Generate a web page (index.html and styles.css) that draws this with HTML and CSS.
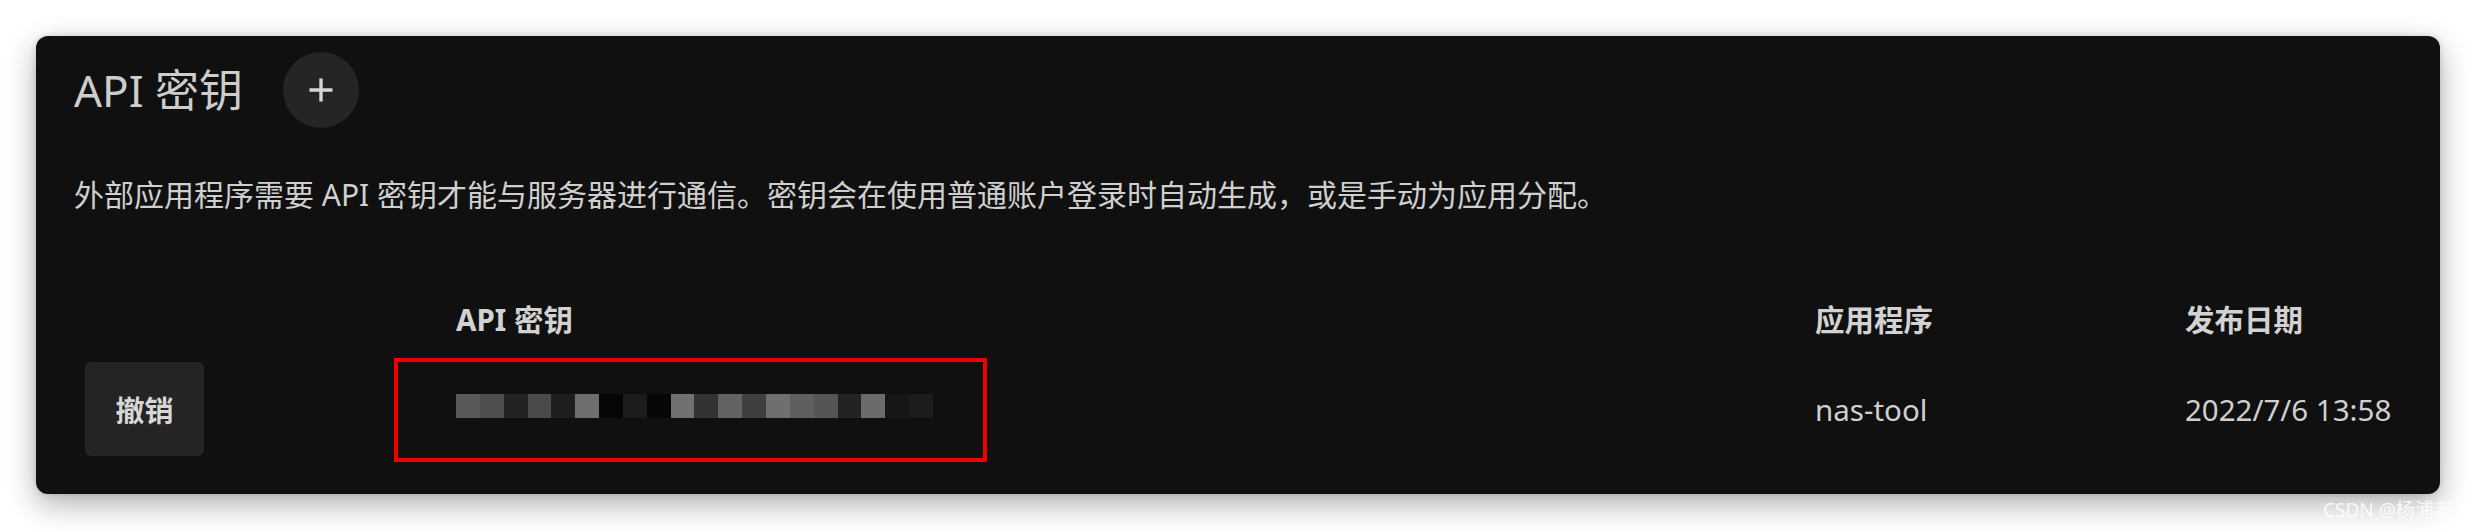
FILE: index.html
```html
<!DOCTYPE html>
<html lang="zh-CN">
<head>
<meta charset="utf-8">
<title>API 密钥</title>
<link rel="stylesheet" href="styles.css">
</head>
<body>
<section class="card">
  <div class="title-row">
    <h2 class="title">API 密钥</h2>
    <button class="add-btn" aria-label="添加">
      <svg width="26" height="26" viewBox="0 0 26 26"><path d="M13 1.5V24.5M1.5 13H24.5" stroke="#d6d6d6" stroke-width="3.4" fill="none"/></svg>
    </button>
  </div>
  <p class="desc">外部应用程序需要 API 密钥才能与服务器进行通信。密钥会在使用普通账户登录时自动生成，或是手动为应用分配。</p>
  <div class="table">
    <div class="th"></div>
    <div class="th">API 密钥</div>
    <div class="th">应用程序</div>
    <div class="th">发布日期</div>

    <div class="td"><button class="revoke">撤销</button></div>
    <div class="td key-cell">
      <div class="pixels">
        <span style="background:#585858"></span><span style="background:#4e4e4e"></span><span style="background:#232323"></span><span style="background:#4a4a4a"></span><span style="background:#1e1e1e"></span><span style="background:#6e6e6e"></span><span style="background:#060606"></span><span style="background:#1c1c1c"></span><span style="background:#070707"></span><span style="background:#717171"></span><span style="background:#333333"></span><span style="background:#626262"></span><span style="background:#3f3f3f"></span><span style="background:#6f6f6f"></span><span style="background:#5f5f5f"></span><span style="background:#555555"></span><span style="background:#232323"></span><span style="background:#6b6b6b"></span><span style="background:#161616"></span><span style="background:#1c1c1c"></span>
      </div>
      <div class="highlight"></div>
    </div>
    <div class="td">nas-tool</div>
    <div class="td">2022/7/6 13:58</div>
  </div>
</section>
<div class="watermark">CSDN @杨浦老苏</div>
</body>
</html>
```

FILE: styles.css
```css
html, body {
  margin: 0;
  padding: 0;
  background: #ffffff;
}
body {
  width: 2476px;
  height: 530px;
  position: relative;
  overflow: hidden;
  font-family: "Noto Sans", "Noto Sans CJK SC", sans-serif;
  color: #cfcfcf;
}
.card {
  margin: 36px 36px 0 36px;
  width: 2404px;
  height: 458px;
  box-sizing: border-box;
  padding: 16px 51px 38px 38px;
  background: #101010;
  border-radius: 12px;
  box-shadow: 0 10px 30px rgba(0,0,0,0.32), 0 0 6px rgba(0,0,0,0.12);
}
.title-row {
  display: flex;
  align-items: center;
  gap: 40px;
  height: 76px;
}
.title {
  margin: 0;
  font-size: 44px;
  font-weight: 400;
  line-height: 1;
  color: #cdcdcd;
}
.add-btn {
  width: 76px;
  height: 76px;
  border-radius: 50%;
  border: none;
  padding: 0;
  background: #252525;
  display: flex;
  align-items: center;
  justify-content: center;
}
.desc {
  margin: 44px 0 0 0;
  font-size: 30px;
  line-height: 45px;
  color: #cfcfcf;
}
.table {
  margin-top: 81px;
  display: grid;
  grid-template-columns: 382px 1359px 370px 1fr;
}
.th {
  height: 44px;
  line-height: 44px;
  font-size: 29.5px;
  font-weight: 700;
  color: #d2d2d2;
  white-space: nowrap;
}
.td {
  height: 114px;
  box-sizing: border-box;
  padding-top: 20px;
  display: flex;
  align-items: center;
  font-size: 29.5px;
  color: #cfcfcf;
  white-space: nowrap;
}
.revoke {
  margin-left: 11px;
  width: 119px;
  height: 94px;
  border: none;
  border-radius: 6px;
  background: #242424;
  color: #d6d6d6;
  font-family: "Noto Sans", "Noto Sans CJK SC", sans-serif;
  font-size: 29px;
  font-weight: 700;
  padding: 0;
}
.key-cell {
  position: relative;
}
.pixels {
  display: flex;
  height: 24px;
  margin-top: -6px;
  filter: blur(0.6px);
}
.pixels span {
  width: 23.85px;
  height: 24px;
}
.highlight {
  position: absolute;
  left: -62px;
  top: 16px;
  width: 593px;
  height: 104px;
  box-sizing: border-box;
  border: 4px solid #f00000;
}
.watermark {
  position: absolute;
  left: 2323px;
  top: 498px;
  font-family: "Noto Sans", "Noto Sans CJK SC", sans-serif;
  font-size: 19px;
  line-height: 24px;
  color: rgba(255,255,255,0.85);
  white-space: nowrap;
}
```
